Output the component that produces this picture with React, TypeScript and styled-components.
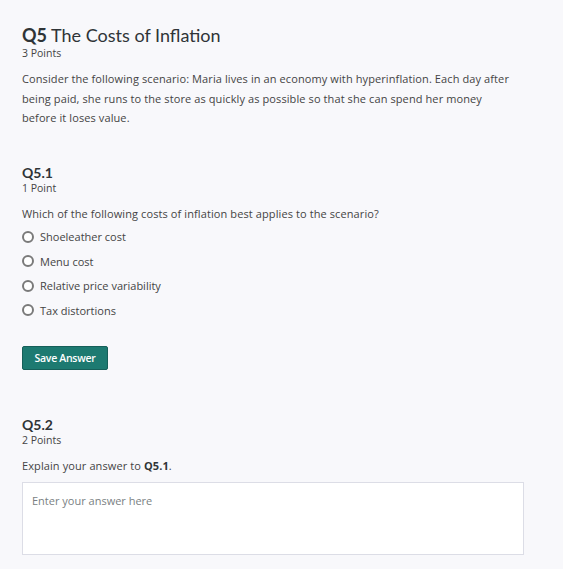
import React from 'react';
import styled, { createGlobalStyle } from 'styled-components';

const GlobalStyle = createGlobalStyle`
  html, body {
    margin: 0;
    padding: 0;
    background: #f8f8fb;
  }
  body {
    font-family: "Open Sans", Lato, sans-serif;
    color: #3a3a3a;
  }
`;

const Page = styled.div`
  padding: 24px 22px 0 22px;
  width: 502px;
`;

const Section = styled.section<{ $gap?: number }>`
  margin-bottom: ${(props) => props.$gap ?? 0}px;
`;

const MainTitle = styled.h1`
  margin: 0;
  font-family: Lato, "Open Sans", sans-serif;
  font-size: 18px;
  font-weight: 400;
  line-height: 22px;
  color: #2f3437;

  strong {
    font-weight: 700;
  }
`;

const SubTitle = styled.h2`
  margin: 0;
  font-family: Lato, "Open Sans", sans-serif;
  font-size: 14px;
  font-weight: 700;
  line-height: 16px;
  color: #2f3437;
`;

const Points = styled.div`
  font-size: 10.5px;
  line-height: 14px;
  color: #444;
`;

const Prompt = styled.p`
  margin: 9px 0 0;
  max-width: 492px;
  font-size: 11px;
  line-height: 19.5px;
  letter-spacing: 0.1px;
  color: #444;

  strong {
    font-weight: 700;
    color: #2f3437;
  }
`;

const OptionList = styled.div`
  display: flex;
  flex-direction: column;
  gap: 5px;
  margin-top: 4px;
`;

const Option = styled.label`
  display: flex;
  align-items: center;
  gap: 6px;
  height: 19.5px;
  font-size: 11px;
  color: #444;
`;

const Radio = styled.span`
  box-sizing: border-box;
  width: 12px;
  height: 12px;
  border-radius: 50%;
  border: 2px solid #7a7a7a;
  background: #fff;
`;

const SaveButton = styled.button`
  margin-top: 26px;
  width: 86px;
  height: 24px;
  padding: 0;
  border: 1px solid #165f59;
  border-radius: 2px;
  background: #1d7a71;
  color: #fff;
  font-family: "Open Sans", Lato, sans-serif;
  font-size: 10.5px;
  font-weight: 600;
  letter-spacing: -0.3px;
`;

const AnswerBox = styled.div`
  box-sizing: border-box;
  margin-top: 6px;
  height: 73px;
  border: 1px solid #dcdde6;
  background: #fff;
  padding: 10px 9px;
  font-size: 11px;
  color: #7a7f83;
`;

const options = ['Shoeleather cost', 'Menu cost', 'Relative price variability', 'Tax distortions'];

const App = () => {
  return (
    <>
      <GlobalStyle />
      <Page>
        <Section $gap={37}>
          <MainTitle>
            <strong>Q5</strong> The Costs of Inflation
          </MainTitle>
          <Points>3 Points</Points>
          <Prompt>
            Consider the following scenario: Maria lives in an economy with hyperinflation. Each day after being
            paid, she runs to the store as quickly as possible so that she can spend her money before it loses value.
          </Prompt>
        </Section>
        <Section $gap={47}>
          <SubTitle>Q5.1</SubTitle>
          <Points>1 Point</Points>
          <Prompt>Which of the following costs of inflation best applies to the scenario?</Prompt>
          <OptionList>
            {options.map((option) => (
              <Option key={option}>
                <Radio />
                {option}
              </Option>
            ))}
          </OptionList>
          <SaveButton>Save Answer</SaveButton>
        </Section>
        <Section>
          <SubTitle>Q5.2</SubTitle>
          <Points>2 Points</Points>
          <Prompt>
            Explain your answer to <strong>Q5.1</strong>.
          </Prompt>
          <AnswerBox>Enter your answer here</AnswerBox>
        </Section>
      </Page>
    </>
  );
};

export default App;
